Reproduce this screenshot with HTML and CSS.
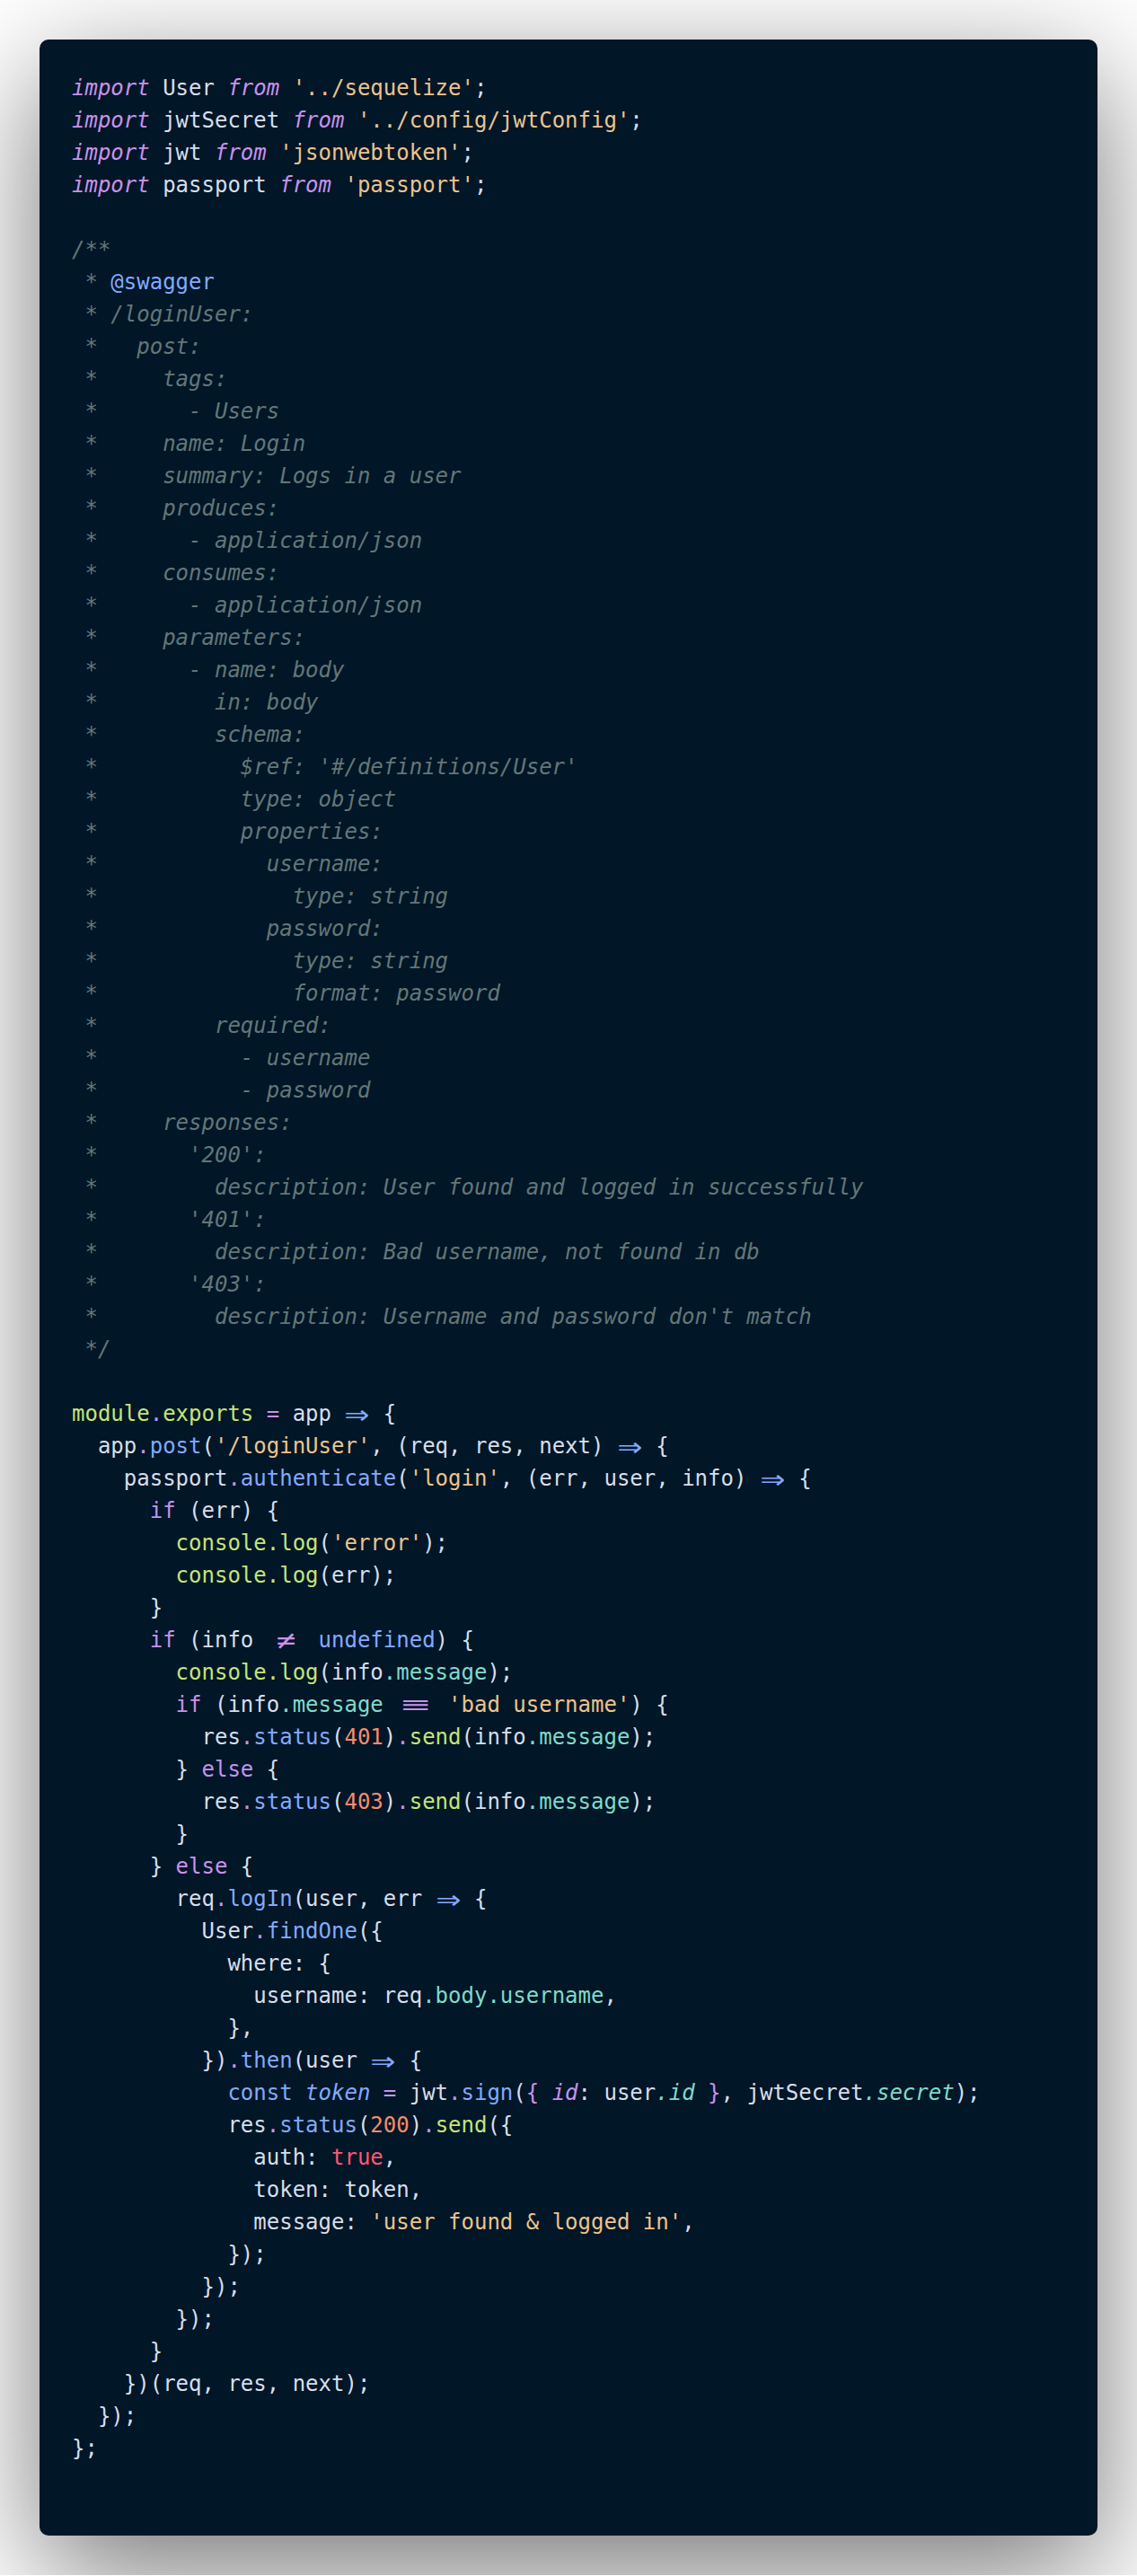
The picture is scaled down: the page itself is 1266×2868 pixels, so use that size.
FILE: index.html
```html
<!DOCTYPE html>
<html lang="en">
<head>
<meta charset="utf-8">
<title>loginUser.js</title>
<link rel="stylesheet" href="styles.css">
</head>
<body>
<main class="card">
<div class="code">
<div class="ln"><span class="k">import</span> User <span class="k">from</span> <span class="s">'../sequelize'</span>;</div>
<div class="ln"><span class="k">import</span> jwtSecret <span class="k">from</span> <span class="s">'../config/jwtConfig'</span>;</div>
<div class="ln"><span class="k">import</span> jwt <span class="k">from</span> <span class="s">'jsonwebtoken'</span>;</div>
<div class="ln"><span class="k">import</span> passport <span class="k">from</span> <span class="s">'passport'</span>;</div>
<div class="ln"> </div>
<div class="ln c">/**</div>
<div class="ln"><span class="c"> * </span><span class="t">@swagger</span></div>
<div class="ln c"> * /loginUser:</div>
<div class="ln c"> *   post:</div>
<div class="ln c"> *     tags:</div>
<div class="ln c"> *       - Users</div>
<div class="ln c"> *     name: Login</div>
<div class="ln c"> *     summary: Logs in a user</div>
<div class="ln c"> *     produces:</div>
<div class="ln c"> *       - application/json</div>
<div class="ln c"> *     consumes:</div>
<div class="ln c"> *       - application/json</div>
<div class="ln c"> *     parameters:</div>
<div class="ln c"> *       - name: body</div>
<div class="ln c"> *         in: body</div>
<div class="ln c"> *         schema:</div>
<div class="ln c"> *           $ref: '#/definitions/User'</div>
<div class="ln c"> *           type: object</div>
<div class="ln c"> *           properties:</div>
<div class="ln c"> *             username:</div>
<div class="ln c"> *               type: string</div>
<div class="ln c"> *             password:</div>
<div class="ln c"> *               type: string</div>
<div class="ln c"> *               format: password</div>
<div class="ln c"> *         required:</div>
<div class="ln c"> *           - username</div>
<div class="ln c"> *           - password</div>
<div class="ln c"> *     responses:</div>
<div class="ln c"> *       '200':</div>
<div class="ln c"> *         description: User found and logged in successfully</div>
<div class="ln c"> *       '401':</div>
<div class="ln c"> *         description: Bad username, not found in db</div>
<div class="ln c"> *       '403':</div>
<div class="ln c"> *         description: Username and password don't match</div>
<div class="ln c"> */</div>
<div class="ln"> </div>
<div class="ln"><span class="g">module</span><span class="o">.</span><span class="g">exports</span> <span class="o">=</span> app <span class="ar">⇒</span> {</div>
<div class="ln">  app<span class="o">.</span><span class="f">post</span>(<span class="s">'/loginUser'</span>, (req, res, next) <span class="ar">⇒</span> {</div>
<div class="ln">    passport<span class="o">.</span><span class="f">authenticate</span>(<span class="s">'login'</span>, (err, user, info) <span class="ar">⇒</span> {</div>
<div class="ln">      <span class="kw">if</span> (err) {</div>
<div class="ln">        <span class="g">console.log</span>(<span class="s">'error'</span>);</div>
<div class="ln">        <span class="g">console.log</span>(err);</div>
<div class="ln">      }</div>
<div class="ln">      <span class="kw">if</span> (info <span class="lig3 o ne">≠</span> <span class="f">undefined</span>) {</div>
<div class="ln">        <span class="g">console.log</span>(info<span class="p">.message</span>);</div>
<div class="ln">        <span class="kw">if</span> (info<span class="p">.message</span> <span class="lig3 o eq">≡</span> <span class="s">'bad username'</span>) {</div>
<div class="ln">          res<span class="o">.</span><span class="f">status</span>(<span class="n">401</span>)<span class="o">.</span><span class="g">send</span>(info<span class="p">.message</span>);</div>
<div class="ln">        } <span class="kw">else</span> {</div>
<div class="ln">          res<span class="o">.</span><span class="f">status</span>(<span class="n">403</span>)<span class="o">.</span><span class="g">send</span>(info<span class="p">.message</span>);</div>
<div class="ln">        }</div>
<div class="ln">      } <span class="kw">else</span> {</div>
<div class="ln">        req<span class="o">.</span><span class="f">logIn</span>(user, err <span class="ar">⇒</span> {</div>
<div class="ln">          User<span class="o">.</span><span class="f">findOne</span>({</div>
<div class="ln">            where: {</div>
<div class="ln">              username: req<span class="p">.body</span><span class="p">.username</span>,</div>
<div class="ln">            },</div>
<div class="ln">          })<span class="o">.</span><span class="f">then</span>(user <span class="ar">⇒</span> {</div>
<div class="ln">            <span class="f">const</span> <span class="f it">token</span> <span class="o">=</span> jwt<span class="o">.</span><span class="f">sign</span>(<span class="o">{</span> <span class="k">id</span>: user<span class="p it">.id</span> <span class="o">}</span>, jwtSecret<span class="p it">.secret</span>);</div>
<div class="ln">            res<span class="o">.</span><span class="f">status</span>(<span class="n">200</span>)<span class="o">.</span><span class="g">send</span>({</div>
<div class="ln">              auth: <span class="b">true</span>,</div>
<div class="ln">              token: token,</div>
<div class="ln">              message: <span class="s">'user found &amp; logged in'</span>,</div>
<div class="ln">            });</div>
<div class="ln">          });</div>
<div class="ln">        });</div>
<div class="ln">      }</div>
<div class="ln">    })(req, res, next);</div>
<div class="ln">  });</div>
<div class="ln">};</div>
</div>
</main>
</body>
</html>
```

FILE: styles.css
```css
html, body {
  margin: 0;
  padding: 0;
  background: #ffffff;
}

.card {
  display: block;
  margin: 44px;
  padding: 36px 36px 79px;
  background: #011627;
  border-radius: 10px;
  box-shadow: 0 40px 136px rgba(0, 0, 0, 0.55);
}

.code {
  display: flex;
  flex-direction: column;
  font-family: "DejaVu Sans Mono", "Liberation Mono", monospace;
  font-size: 24px;
  line-height: 36px;
  color: #d6deeb;
  font-variant-ligatures: none;
}

.ln {
  height: 36px;
  white-space: pre;
}

.k { color: #c792ea; font-style: italic; }
.kw { color: #c792ea; }
.s { color: #ecc48d; }
.c { color: #637777; font-style: italic; }
.t { color: #82aaff; }
.f { color: #82aaff; }
.g { color: #c5e478; }
.p { color: #7fdbca; }
.n { color: #f78c6c; }
.o { color: #c792ea; }
.b { color: #ff5874; }
.it { font-style: italic; }

.ar {
  display: inline-block;
  width: 2ch;
  text-align: center;
  color: #82aaff;
  transform: scale(1.9, 1.5);
}

.lig3 {
  display: inline-block;
  width: 3ch;
  text-align: center;
}

.ne {
  transform: scale(1.5, 1.2);
}

.eq {
  transform: scaleX(2.2);
}
```
